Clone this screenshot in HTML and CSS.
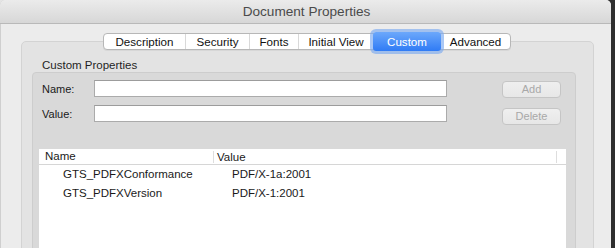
FILE: index.html
```html
<!DOCTYPE html>
<html>
<head>
<meta charset="utf-8">
<link rel="stylesheet" href="styles.css">
</head>
<body>
<div class="window">
  <div class="titlebar">Document Properties</div>
  <div class="tabs">
    <div class="tab w-desc">Description</div>
    <div class="tab w-sec">Security</div>
    <div class="tab w-fonts">Fonts</div>
    <div class="tab w-iv">Initial View</div>
    <div class="tab w-custom active">Custom</div>
    <div class="tab w-adv">Advanced</div>
  </div>
  <div class="tabbox">
    <div class="group-label">Custom Properties</div>
    <div class="group">
      <div class="form">
        <div class="fields">
          <div class="field-row"><span class="label">Name:</span><div class="input"></div></div>
          <div class="field-row"><span class="label">Value:</span><div class="input"></div></div>
        </div>
        <div class="buttons">
          <div class="btn btn-add">Add</div>
          <div class="btn btn-del">Delete</div>
        </div>
      </div>
      <div class="table">
        <div class="thead">
          <div class="th col-name">Name</div>
          <div class="th col-value">Value</div>
          <div class="th col-rest"></div>
        </div>
        <div class="tr">
          <div class="td col-name">GTS_PDFXConformance</div>
          <div class="td col-value">PDF/X-1a:2001</div>
        </div>
        <div class="tr">
          <div class="td col-name">GTS_PDFXVersion</div>
          <div class="td col-value">PDF/X-1:2001</div>
        </div>
      </div>
    </div>
  </div>
</div>
</body>
</html>
```

FILE: styles.css
```css
html, body {
  margin: 0;
  padding: 0;
}
body {
  width: 615px;
  height: 248px;
  overflow: hidden;
  background: linear-gradient(to right, #e4e4e4 0, #e4e4e4 465px, #2e2e2e 465px);
  font-family: "Liberation Sans", Arial, sans-serif;
  color: #1a1a1a;
}
.window {
  width: 611px;
  height: 260px;
  background: #ececec;
  border-radius: 5px 5px 0 0;
  overflow: hidden;
  box-shadow: inset 1px 0 0 #cfcfcf;
}
.titlebar {
  height: 23px;
  line-height: 23px;
  text-align: center;
  font-size: 13.6px;
  color: #4b4b4b;
  background: linear-gradient(#ebebeb, #d7d7d7);
  border-bottom: 1px solid #b9b9b9;
  border-radius: 5px 5px 0 0;
  padding-left: 2px;
}
.tabs {
  position: relative;
  z-index: 1;
  display: flex;
  width: 406px;
  height: 15px;
  margin: 9px 0 0 103px;
  background: #fff;
  border: 1px solid #b7b7b7;
  border-radius: 4px;
  box-shadow: 0 1px 0 rgba(0,0,0,0.05);
}
.tab {
  font-size: 11.6px;
  line-height: 15px;
  text-align: center;
  color: #111;
  border-right: 1px solid #d9d9d9;
  box-sizing: border-box;
}
.tab:last-child { border-right: none; }
.w-desc { width: 82px; }
.w-sec { width: 64px; }
.w-fonts { width: 49px; }
.w-iv { width: 75px; }
.w-custom { width: 67px; }
.w-adv { flex: 1; }
.tab.active {
  color: #fff;
  background: linear-gradient(#6ca8fb, #2f7bf5);
  border-radius: 3px;
  border-right: none;
  margin: -2px 0 -2px -1px;
  line-height: 19px;
  width: 68px;
  box-shadow: 0 0 0 3px rgba(125, 170, 240, 0.65);
}
.tabbox {
  margin: -9px 17px 0 21px;
  height: 230px;
  background: #e3e3e3;
  border: 1px solid #d3d3d3;
  border-radius: 5px;
  box-sizing: border-box;
}
.group-label {
  font-size: 11.5px;
  line-height: 13px;
  margin: 17px 0 0 20px;
  color: #1f1f1f;
}
.group {
  margin: 0 17px 0 10px;
  height: 200px;
  background: #d9d9d9;
  border: 1px solid #cdcdcd;
  border-radius: 4px;
  box-sizing: border-box;
}
.form {
  display: flex;
}
.fields {
  padding: 7px 0 0 9px;
  display: flex;
  flex-direction: column;
  gap: 8px;
}
.field-row {
  display: flex;
  align-items: center;
}
.label {
  width: 52px;
  font-size: 11px;
  color: #1a1a1a;
}
.input {
  width: 351px;
  height: 15px;
  background: #fff;
  border: 1px solid #ababab;
  border-top-color: #9c9c9c;
}
.buttons {
  margin-left: 55px;
  display: flex;
  flex-direction: column;
}
.btn {
  width: 57px;
  height: 15px;
  line-height: 15px;
  text-align: center;
  font-size: 11px;
  color: #a8a8a8;
  background: linear-gradient(#efefef, #e7e7e7);
  border: 1px solid #c5c5c5;
  border-radius: 4px;
}
.btn-add { margin-top: 8px; }
.btn-del { margin-top: 10px; }
.table {
  margin: 24px 9px 0 6px;
  height: 110px;
  background: #fff;
}
.thead {
  display: flex;
  height: 15px;
  border-bottom: 1px solid #d6d6d6;
  font-size: 11.5px;
  line-height: 15px;
  color: #1a1a1a;
}
.th.col-name {
  width: 174px;
  padding-left: 6px;
  box-sizing: border-box;
  position: relative;
}
.th.col-value {
  width: 344px;
  padding-left: 3px;
  box-sizing: border-box;
  border-left: 1px solid #dedede;
  border-right: 1px solid #dedede;
  margin: 2px 0 1px;
  line-height: 12px;
}
.tr {
  display: flex;
  height: 19px;
  line-height: 19px;
  font-size: 11.5px;
}
.td.col-name {
  width: 174px;
  padding-left: 24px;
  box-sizing: border-box;
}
.td.col-value {
  padding-left: 19px;
}
```
